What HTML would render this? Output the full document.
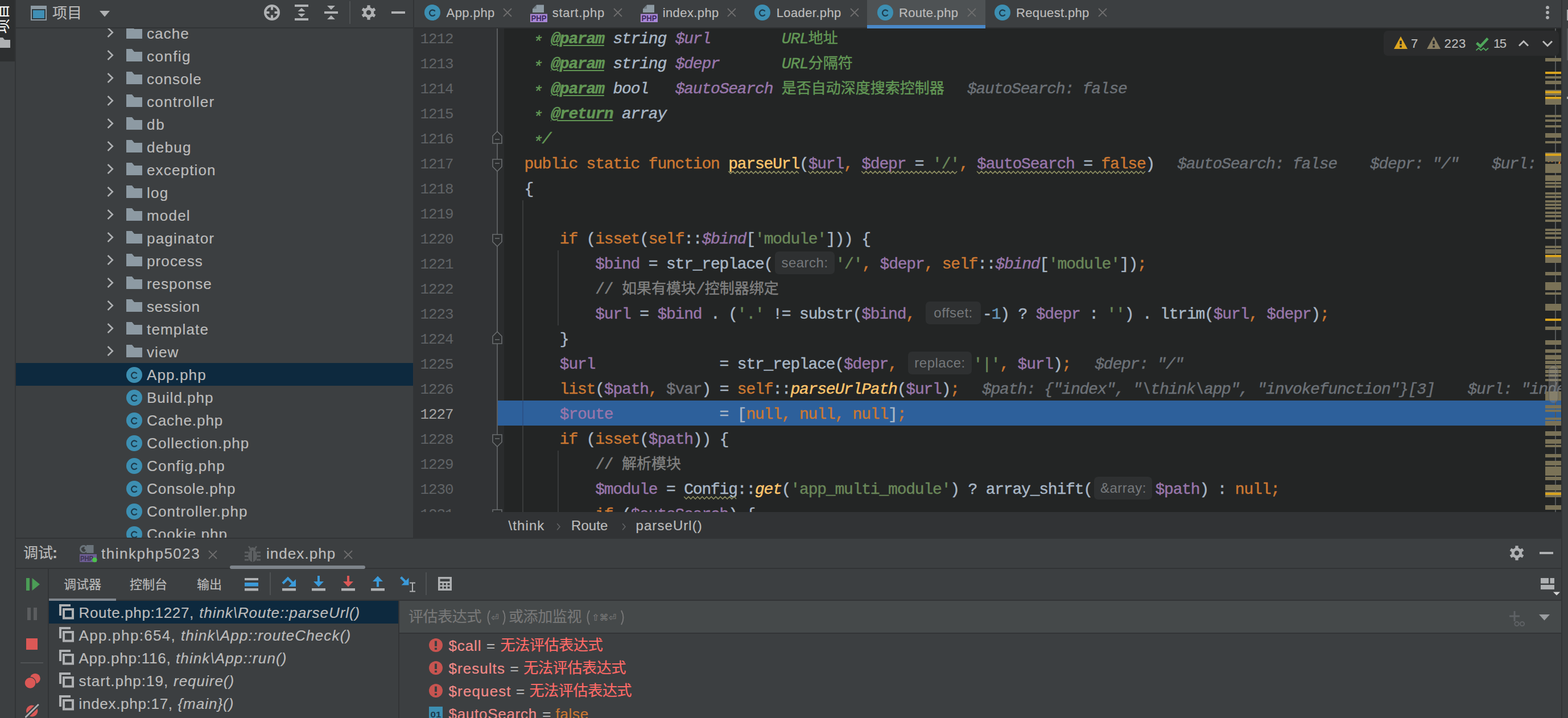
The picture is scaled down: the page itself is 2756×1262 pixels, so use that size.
<!DOCTYPE html>
<html><head><meta charset="utf-8"><title>PhpStorm</title>
<style>html,body{margin:0;padding:0;background:#3c3f41;}
body{width:2756px;height:1262px;overflow:hidden;position:relative;font-family:"Liberation Sans",sans-serif;font-kerning:none;}
#root{position:absolute;left:0;top:0;width:2756px;height:1262px;overflow:hidden;}
#root>div,#root>svg{position:absolute;}
.t{white-space:pre;-webkit-text-stroke:0.22px currentColor;}
.clip{overflow:hidden;}
.clip>div,.clip>svg{position:absolute;}
.ln{position:absolute;left:0;height:44px;white-space:pre;font:28px/44px "Liberation Mono",monospace;letter-spacing:-1.203px;color:#a9b7c6;-webkit-text-stroke:0.45px currentColor;}
.ln span{display:inline-block;height:44px;vertical-align:top;}
.ln span.z{display:inline;height:auto;vertical-align:baseline;font-family:"Liberation Mono","Noto Sans CJK SC",monospace;font-size:26px;font-style:normal;letter-spacing:0;}
.k{color:#cc7832}.s{color:#6a8759}.v{color:#9876aa}.vi{color:#9876aa;font-style:italic}
.f{color:#ffc66d}.fi{color:#ffc66d;font-style:italic}.c{color:#808080}.d{color:#629755;font-style:italic}
.dt{color:#629755;font-style:italic;font-weight:bold;text-decoration:underline;text-decoration-thickness:2px;text-underline-offset:3px}
.di{color:#a9b7c6;font-style:italic}.n{color:#6897bb}.u{color:#72737a}
.h{color:#6c7177;font-style:italic}
.hint{-webkit-text-stroke:0;display:inline-block;box-sizing:border-box;height:40px !important;margin-top:-1px;border-radius:7px;background:#2e3031;color:#75787b;font:24px/39px "Liberation Sans",sans-serif;letter-spacing:0.5px;text-align:center;vertical-align:top;}
</style></head>
<body>
<div id="root">
<div style="left:0px;top:0px;width:26px;height:108px;background:#2d2f30;"></div>
<div style="left:26px;top:0px;width:2px;height:1262px;background:#323436;"></div>
<svg style="left:0px;top:66px;" width="18" height="18" viewBox="0 0 18 18"><path d="M-8 0L5 0L8 4L18 4L18 18L-8 18Z" fill="#afb1b3"/></svg>
<div style="left:-8px;top:7px;width:26px;height:52px;overflow:hidden"><div style="position:absolute;left:0;top:52px;transform:rotate(-90deg);transform-origin:0 0;white-space:pre;font:26px/26px 'Liberation Sans','Noto Sans CJK SC',sans-serif;color:#ffffff;">项目</div></div>
<div style="left:28px;top:48px;width:698px;height:2px;background:#313335;"></div>
<svg style="left:54px;top:10px;" width="28" height="26" viewBox="0 0 28 26"><rect x="0" y="0" width="28" height="26" fill="#8d9aa3"/><rect x="2" y="6" width="24" height="18" fill="#2f3a40"/><rect x="4" y="8" width="20" height="14" fill="#3f8fb5"/></svg>
<div class="t" style="left:92px;top:9.5px;font:26px/26px 'Liberation Sans','Noto Sans CJK SC',sans-serif;color:#bbbbbb;">项目</div>
<svg style="left:175px;top:19px;" width="18" height="11" viewBox="0 0 18 11"><path d="M0 0H18L9 10.5Z" fill="#afb1b3"/></svg>
<svg style="left:464px;top:8px;" width="28" height="28" viewBox="0 0 28 28"><circle cx="14" cy="14" r="12" fill="none" stroke="#afb1b3" stroke-width="4"/><path d="M14 2V9.5M14 18.5V26M2 14H9.5M18.5 14H26" stroke="#afb1b3" stroke-width="4"/></svg>
<svg style="left:518px;top:8px;" width="24" height="28" viewBox="0 0 24 28"><path d="M0 0H24V4H0ZM0 24H24V28H0ZM12 6L18.5 12H5.5ZM12 22L18.5 16H5.5Z" fill="#afb1b3"/></svg>
<svg style="left:570px;top:8px;" width="24" height="28" viewBox="0 0 24 28"><path d="M0 12H24V16H0ZM12 9L19 2H5ZM12 19L19 26H5Z" fill="#afb1b3"/></svg>
<div style="left:614px;top:2px;width:2px;height:40px;background:#4f5254;"></div>
<svg style="left:634px;top:8px;" width="28" height="28" viewBox="0 0 28 28"><path d="M11.3 5.1L11.4 1.3L16.6 1.3L16.7 5.1L20.3 7.2L23.7 5.4L26.3 9.9L23.1 11.9L23.1 16.1L26.3 18.1L23.7 22.6L20.3 20.8L16.7 22.9L16.6 26.7L11.4 26.7L11.3 22.9L7.7 20.8L4.3 22.6L1.7 18.1L4.9 16.1L4.9 11.9L1.7 9.9L4.3 5.4L7.7 7.2ZM18.3 14A4.3 4.3 0 1 0 9.7 14A4.3 4.3 0 1 0 18.3 14Z" fill="#afb1b3" fill-rule="evenodd"/></svg>
<div style="left:688px;top:20px;width:24px;height:4px;background:#afb1b3;"></div>
<div class="clip" style="left:28px;top:50px;width:698px;height:895px">
<svg style="left:160px;top:-2.0px" width="13" height="18" viewBox="0 0 13 18"><path d="M1.5 1L9.8 9L1.5 17" fill="none" stroke="#afb1b3" stroke-width="2.6"/></svg>
<svg style="left:194px;top:-3.8000000000000007px" width="28" height="22" viewBox="0 0 28 22"><path d="M0 0H10L14 5H28V22H0Z" fill="#8d9aa3"/></svg>
<div class="t" style="left:230px;top:-3.8px;font:26px/26px 'Liberation Sans',sans-serif;color:#bbbbbb;letter-spacing:1.07px;">cache</div>
<svg style="left:160px;top:38.0px" width="13" height="18" viewBox="0 0 13 18"><path d="M1.5 1L9.8 9L1.5 17" fill="none" stroke="#afb1b3" stroke-width="2.6"/></svg>
<svg style="left:194px;top:36.2px" width="28" height="22" viewBox="0 0 28 22"><path d="M0 0H10L14 5H28V22H0Z" fill="#8d9aa3"/></svg>
<div class="t" style="left:230px;top:36.2px;font:26px/26px 'Liberation Sans',sans-serif;color:#bbbbbb;letter-spacing:1.42px;">config</div>
<svg style="left:160px;top:78.0px" width="13" height="18" viewBox="0 0 13 18"><path d="M1.5 1L9.8 9L1.5 17" fill="none" stroke="#afb1b3" stroke-width="2.6"/></svg>
<svg style="left:194px;top:76.2px" width="28" height="22" viewBox="0 0 28 22"><path d="M0 0H10L14 5H28V22H0Z" fill="#8d9aa3"/></svg>
<div class="t" style="left:230px;top:76.2px;font:26px/26px 'Liberation Sans',sans-serif;color:#bbbbbb;letter-spacing:1.03px;">console</div>
<svg style="left:160px;top:117.99999999999999px" width="13" height="18" viewBox="0 0 13 18"><path d="M1.5 1L9.8 9L1.5 17" fill="none" stroke="#afb1b3" stroke-width="2.6"/></svg>
<svg style="left:194px;top:116.19999999999999px" width="28" height="22" viewBox="0 0 28 22"><path d="M0 0H10L14 5H28V22H0Z" fill="#8d9aa3"/></svg>
<div class="t" style="left:230px;top:116.2px;font:26px/26px 'Liberation Sans',sans-serif;color:#bbbbbb;letter-spacing:1.25px;">controller</div>
<svg style="left:160px;top:158.0px" width="13" height="18" viewBox="0 0 13 18"><path d="M1.5 1L9.8 9L1.5 17" fill="none" stroke="#afb1b3" stroke-width="2.6"/></svg>
<svg style="left:194px;top:156.2px" width="28" height="22" viewBox="0 0 28 22"><path d="M0 0H10L14 5H28V22H0Z" fill="#8d9aa3"/></svg>
<div class="t" style="left:230px;top:156.2px;font:26px/26px 'Liberation Sans',sans-serif;color:#bbbbbb;letter-spacing:1.67px;">db</div>
<svg style="left:160px;top:198.0px" width="13" height="18" viewBox="0 0 13 18"><path d="M1.5 1L9.8 9L1.5 17" fill="none" stroke="#afb1b3" stroke-width="2.6"/></svg>
<svg style="left:194px;top:196.2px" width="28" height="22" viewBox="0 0 28 22"><path d="M0 0H10L14 5H28V22H0Z" fill="#8d9aa3"/></svg>
<div class="t" style="left:230px;top:196.2px;font:26px/26px 'Liberation Sans',sans-serif;color:#bbbbbb;letter-spacing:1.27px;">debug</div>
<svg style="left:160px;top:238.0px" width="13" height="18" viewBox="0 0 13 18"><path d="M1.5 1L9.8 9L1.5 17" fill="none" stroke="#afb1b3" stroke-width="2.6"/></svg>
<svg style="left:194px;top:236.2px" width="28" height="22" viewBox="0 0 28 22"><path d="M0 0H10L14 5H28V22H0Z" fill="#8d9aa3"/></svg>
<div class="t" style="left:230px;top:236.2px;font:26px/26px 'Liberation Sans',sans-serif;color:#bbbbbb;letter-spacing:1.15px;">exception</div>
<svg style="left:160px;top:278.0px" width="13" height="18" viewBox="0 0 13 18"><path d="M1.5 1L9.8 9L1.5 17" fill="none" stroke="#afb1b3" stroke-width="2.6"/></svg>
<svg style="left:194px;top:276.2px" width="28" height="22" viewBox="0 0 28 22"><path d="M0 0H10L14 5H28V22H0Z" fill="#8d9aa3"/></svg>
<div class="t" style="left:230px;top:276.2px;font:26px/26px 'Liberation Sans',sans-serif;color:#bbbbbb;letter-spacing:1.29px;">log</div>
<svg style="left:160px;top:318.0px" width="13" height="18" viewBox="0 0 13 18"><path d="M1.5 1L9.8 9L1.5 17" fill="none" stroke="#afb1b3" stroke-width="2.6"/></svg>
<svg style="left:194px;top:316.2px" width="28" height="22" viewBox="0 0 28 22"><path d="M0 0H10L14 5H28V22H0Z" fill="#8d9aa3"/></svg>
<div class="t" style="left:230px;top:316.2px;font:26px/26px 'Liberation Sans',sans-serif;color:#bbbbbb;letter-spacing:1.19px;">model</div>
<svg style="left:160px;top:358.0px" width="13" height="18" viewBox="0 0 13 18"><path d="M1.5 1L9.8 9L1.5 17" fill="none" stroke="#afb1b3" stroke-width="2.6"/></svg>
<svg style="left:194px;top:356.2px" width="28" height="22" viewBox="0 0 28 22"><path d="M0 0H10L14 5H28V22H0Z" fill="#8d9aa3"/></svg>
<div class="t" style="left:230px;top:356.2px;font:26px/26px 'Liberation Sans',sans-serif;color:#bbbbbb;letter-spacing:1.20px;">paginator</div>
<svg style="left:160px;top:398.0px" width="13" height="18" viewBox="0 0 13 18"><path d="M1.5 1L9.8 9L1.5 17" fill="none" stroke="#afb1b3" stroke-width="2.6"/></svg>
<svg style="left:194px;top:396.2px" width="28" height="22" viewBox="0 0 28 22"><path d="M0 0H10L14 5H28V22H0Z" fill="#8d9aa3"/></svg>
<div class="t" style="left:230px;top:396.2px;font:26px/26px 'Liberation Sans',sans-serif;color:#bbbbbb;letter-spacing:1.12px;">process</div>
<svg style="left:160px;top:438.0px" width="13" height="18" viewBox="0 0 13 18"><path d="M1.5 1L9.8 9L1.5 17" fill="none" stroke="#afb1b3" stroke-width="2.6"/></svg>
<svg style="left:194px;top:436.2px" width="28" height="22" viewBox="0 0 28 22"><path d="M0 0H10L14 5H28V22H0Z" fill="#8d9aa3"/></svg>
<div class="t" style="left:230px;top:436.2px;font:26px/26px 'Liberation Sans',sans-serif;color:#bbbbbb;letter-spacing:0.96px;">response</div>
<svg style="left:160px;top:478.0px" width="13" height="18" viewBox="0 0 13 18"><path d="M1.5 1L9.8 9L1.5 17" fill="none" stroke="#afb1b3" stroke-width="2.6"/></svg>
<svg style="left:194px;top:476.2px" width="28" height="22" viewBox="0 0 28 22"><path d="M0 0H10L14 5H28V22H0Z" fill="#8d9aa3"/></svg>
<div class="t" style="left:230px;top:476.2px;font:26px/26px 'Liberation Sans',sans-serif;color:#bbbbbb;letter-spacing:0.79px;">session</div>
<svg style="left:160px;top:518.0px" width="13" height="18" viewBox="0 0 13 18"><path d="M1.5 1L9.8 9L1.5 17" fill="none" stroke="#afb1b3" stroke-width="2.6"/></svg>
<svg style="left:194px;top:516.2px" width="28" height="22" viewBox="0 0 28 22"><path d="M0 0H10L14 5H28V22H0Z" fill="#8d9aa3"/></svg>
<div class="t" style="left:230px;top:516.2px;font:26px/26px 'Liberation Sans',sans-serif;color:#bbbbbb;letter-spacing:1.17px;">template</div>
<svg style="left:160px;top:558.0px" width="13" height="18" viewBox="0 0 13 18"><path d="M1.5 1L9.8 9L1.5 17" fill="none" stroke="#afb1b3" stroke-width="2.6"/></svg>
<svg style="left:194px;top:556.2px" width="28" height="22" viewBox="0 0 28 22"><path d="M0 0H10L14 5H28V22H0Z" fill="#8d9aa3"/></svg>
<div class="t" style="left:230px;top:556.2px;font:26px/26px 'Liberation Sans',sans-serif;color:#bbbbbb;letter-spacing:1.12px;">view</div>
<div style="left:0;top:588px;width:698px;height:40px;background:#0d293e"></div>
<svg style="left:194px;top:595.2px" width="28" height="28" viewBox="0 0 28 28"><circle cx="14" cy="14" r="14" fill="#3d8fb2"/><path d="M18.6 11.9A5.2 5.2 0 1 0 18.6 17.5" fill="none" stroke="#1d3b4c" stroke-width="2.3"/></svg>
<div class="t" style="left:230px;top:596.2px;font:26px/26px 'Liberation Sans',sans-serif;color:#bbbbbb;letter-spacing:1.12px;">App.php</div>
<svg style="left:194px;top:635.2px" width="28" height="28" viewBox="0 0 28 28"><circle cx="14" cy="14" r="14" fill="#3d8fb2"/><path d="M18.6 11.9A5.2 5.2 0 1 0 18.6 17.5" fill="none" stroke="#1d3b4c" stroke-width="2.3"/></svg>
<div class="t" style="left:230px;top:636.2px;font:26px/26px 'Liberation Sans',sans-serif;color:#bbbbbb;letter-spacing:1.01px;">Build.php</div>
<svg style="left:194px;top:675.2px" width="28" height="28" viewBox="0 0 28 28"><circle cx="14" cy="14" r="14" fill="#3d8fb2"/><path d="M18.6 11.9A5.2 5.2 0 1 0 18.6 17.5" fill="none" stroke="#1d3b4c" stroke-width="2.3"/></svg>
<div class="t" style="left:230px;top:676.2px;font:26px/26px 'Liberation Sans',sans-serif;color:#bbbbbb;letter-spacing:0.94px;">Cache.php</div>
<svg style="left:194px;top:715.2px" width="28" height="28" viewBox="0 0 28 28"><circle cx="14" cy="14" r="14" fill="#3d8fb2"/><path d="M18.6 11.9A5.2 5.2 0 1 0 18.6 17.5" fill="none" stroke="#1d3b4c" stroke-width="2.3"/></svg>
<div class="t" style="left:230px;top:716.2px;font:26px/26px 'Liberation Sans',sans-serif;color:#bbbbbb;letter-spacing:1.12px;">Collection.php</div>
<svg style="left:194px;top:755.2px" width="28" height="28" viewBox="0 0 28 28"><circle cx="14" cy="14" r="14" fill="#3d8fb2"/><path d="M18.6 11.9A5.2 5.2 0 1 0 18.6 17.5" fill="none" stroke="#1d3b4c" stroke-width="2.3"/></svg>
<div class="t" style="left:230px;top:756.2px;font:26px/26px 'Liberation Sans',sans-serif;color:#bbbbbb;letter-spacing:1.21px;">Config.php</div>
<svg style="left:194px;top:795.2px" width="28" height="28" viewBox="0 0 28 28"><circle cx="14" cy="14" r="14" fill="#3d8fb2"/><path d="M18.6 11.9A5.2 5.2 0 1 0 18.6 17.5" fill="none" stroke="#1d3b4c" stroke-width="2.3"/></svg>
<div class="t" style="left:230px;top:796.2px;font:26px/26px 'Liberation Sans',sans-serif;color:#bbbbbb;letter-spacing:0.94px;">Console.php</div>
<svg style="left:194px;top:835.2px" width="28" height="28" viewBox="0 0 28 28"><circle cx="14" cy="14" r="14" fill="#3d8fb2"/><path d="M18.6 11.9A5.2 5.2 0 1 0 18.6 17.5" fill="none" stroke="#1d3b4c" stroke-width="2.3"/></svg>
<div class="t" style="left:230px;top:836.2px;font:26px/26px 'Liberation Sans',sans-serif;color:#bbbbbb;letter-spacing:1.12px;">Controller.php</div>
<svg style="left:194px;top:875.2px" width="28" height="28" viewBox="0 0 28 28"><circle cx="14" cy="14" r="14" fill="#3d8fb2"/><path d="M18.6 11.9A5.2 5.2 0 1 0 18.6 17.5" fill="none" stroke="#1d3b4c" stroke-width="2.3"/></svg>
<div class="t" style="left:230px;top:876.2px;font:26px/26px 'Liberation Sans',sans-serif;color:#bbbbbb;letter-spacing:1.05px;">Cookie.php</div>
</div>
<div style="left:726px;top:0px;width:2px;height:945px;background:#323436;"></div>
<div style="left:728px;top:48px;width:2016px;height:2px;background:#2f3133;"></div>
<div style="left:1524px;top:0px;width:208px;height:44px;background:#4e5254;"></div>
<div style="left:1524px;top:44px;width:208px;height:6px;background:#4a88c7;"></div>
<svg style="left:746px;top:8px" width="28" height="28" viewBox="0 0 28 28"><circle cx="14" cy="14" r="14" fill="#3d8fb2"/><path d="M18.6 11.9A5.2 5.2 0 1 0 18.6 17.5" fill="none" stroke="#1d3b4c" stroke-width="2.3"/></svg>
<div class="t" style="left:784.5px;top:12.4px;font:22px/22px 'Liberation Sans',sans-serif;color:#bbbbbb;letter-spacing:0.48px;">App.php</div>
<svg style="left:884px;top:14px" width="16" height="16" viewBox="-8 -8 16 16"><path d="M-7 -7L7 7M7 -7L-7 7" stroke="#6e6e6e" stroke-width="1.8" fill="none"/></svg>
<svg style="left:932px;top:7.5px" width="30" height="31" viewBox="0 0 30 31"><path d="M4 7.5L11 0.5H24V14H4Z" fill="#8d9aa3"/><path d="M4 7.5L11 0.5V7.5Z" fill="#3c3f41" opacity="0.35"/><rect x="0" y="16.5" width="30" height="14.5" fill="#a987d6"/><text x="15" y="29" text-anchor="middle" font-family="Liberation Sans,sans-serif" font-weight="bold" font-size="14.5" fill="#3b2a5c" textLength="27" lengthAdjust="spacingAndGlyphs">PHP</text></svg>
<div class="t" style="left:970.7px;top:12.4px;font:22px/22px 'Liberation Sans',sans-serif;color:#bbbbbb;letter-spacing:0.75px;">start.php</div>
<svg style="left:1078px;top:14px" width="16" height="16" viewBox="-8 -8 16 16"><path d="M-7 -7L7 7M7 -7L-7 7" stroke="#6e6e6e" stroke-width="1.8" fill="none"/></svg>
<svg style="left:1126px;top:7.5px" width="30" height="31" viewBox="0 0 30 31"><path d="M4 7.5L11 0.5H24V14H4Z" fill="#8d9aa3"/><path d="M4 7.5L11 0.5V7.5Z" fill="#3c3f41" opacity="0.35"/><rect x="0" y="16.5" width="30" height="14.5" fill="#a987d6"/><text x="15" y="29" text-anchor="middle" font-family="Liberation Sans,sans-serif" font-weight="bold" font-size="14.5" fill="#3b2a5c" textLength="27" lengthAdjust="spacingAndGlyphs">PHP</text></svg>
<div class="t" style="left:1164.7px;top:12.4px;font:22px/22px 'Liberation Sans',sans-serif;color:#bbbbbb;letter-spacing:0.40px;">index.php</div>
<svg style="left:1278px;top:14px" width="16" height="16" viewBox="-8 -8 16 16"><path d="M-7 -7L7 7M7 -7L-7 7" stroke="#6e6e6e" stroke-width="1.8" fill="none"/></svg>
<svg style="left:1326px;top:8px" width="28" height="28" viewBox="0 0 28 28"><circle cx="14" cy="14" r="14" fill="#3d8fb2"/><path d="M18.6 11.9A5.2 5.2 0 1 0 18.6 17.5" fill="none" stroke="#1d3b4c" stroke-width="2.3"/></svg>
<div class="t" style="left:1364.7px;top:12.4px;font:22px/22px 'Liberation Sans',sans-serif;color:#bbbbbb;letter-spacing:0.39px;">Loader.php</div>
<svg style="left:1494px;top:14px" width="16" height="16" viewBox="-8 -8 16 16"><path d="M-7 -7L7 7M7 -7L-7 7" stroke="#6e6e6e" stroke-width="1.8" fill="none"/></svg>
<svg style="left:1542px;top:8px" width="28" height="28" viewBox="0 0 28 28"><circle cx="14" cy="14" r="14" fill="#3d8fb2"/><path d="M18.6 11.9A5.2 5.2 0 1 0 18.6 17.5" fill="none" stroke="#1d3b4c" stroke-width="2.3"/></svg>
<div class="t" style="left:1580px;top:12.4px;font:22px/22px 'Liberation Sans',sans-serif;color:#bbbbbb;letter-spacing:0.30px;">Route.php</div>
<svg style="left:1700px;top:14px" width="16" height="16" viewBox="-8 -8 16 16"><path d="M-7 -7L7 7M7 -7L-7 7" stroke="#6e6e6e" stroke-width="1.8" fill="none"/></svg>
<svg style="left:1748px;top:8px" width="28" height="28" viewBox="0 0 28 28"><circle cx="14" cy="14" r="14" fill="#3d8fb2"/><path d="M18.6 11.9A5.2 5.2 0 1 0 18.6 17.5" fill="none" stroke="#1d3b4c" stroke-width="2.3"/></svg>
<div class="t" style="left:1786px;top:12.4px;font:22px/22px 'Liberation Sans',sans-serif;color:#bbbbbb;letter-spacing:0.36px;">Request.php</div>
<svg style="left:1930px;top:14px" width="16" height="16" viewBox="-8 -8 16 16"><path d="M-7 -7L7 7M7 -7L-7 7" stroke="#6e6e6e" stroke-width="1.8" fill="none"/></svg>
<svg style="left:2716px;top:10px;" width="8" height="24" viewBox="0 0 8 24"><circle cx="4" cy="3.2" r="2.9" fill="#afb1b3"/><circle cx="4" cy="12.0" r="2.9" fill="#afb1b3"/><circle cx="4" cy="20.8" r="2.9" fill="#afb1b3"/></svg>
<div class="clip" style="left:728px;top:50px;width:2016px;height:850px;background:#232525">
<div style="left:0;top:0;width:145px;height:850px;background:#313335"></div>
<div style="left:147px;top:0;width:11px;height:850px;background:#2a2c2d"></div>
<div style="left:147px;top:654px;width:1869px;height:44px;background:#2d609b"></div>
<div style="left:145px;top:0;width:2px;height:850px;background:#5a5d5f"></div>
<div style="left:190px;top:302px;width:2px;height:850px;background:#393b3c"></div>
<div style="left:190px;top:654px;width:2px;height:44px;background:#2a5288"></div>
<div style="left:252px;top:390px;width:2px;height:132px;background:#393b3c"></div>
<div style="left:252px;top:742px;width:2px;height:200px;background:#393b3c"></div>
<div class="ln" style="left:10.5px;top:-3px;color:#606366;font-size:26px;letter-spacing:-1.1px;-webkit-text-stroke:0">1212</div>
<div class="ln" style="left:10.5px;top:41px;color:#606366;font-size:26px;letter-spacing:-1.1px;-webkit-text-stroke:0">1213</div>
<div class="ln" style="left:10.5px;top:85px;color:#606366;font-size:26px;letter-spacing:-1.1px;-webkit-text-stroke:0">1214</div>
<div class="ln" style="left:10.5px;top:129px;color:#606366;font-size:26px;letter-spacing:-1.1px;-webkit-text-stroke:0">1215</div>
<div class="ln" style="left:10.5px;top:173px;color:#606366;font-size:26px;letter-spacing:-1.1px;-webkit-text-stroke:0">1216</div>
<div class="ln" style="left:10.5px;top:217px;color:#606366;font-size:26px;letter-spacing:-1.1px;-webkit-text-stroke:0">1217</div>
<div class="ln" style="left:10.5px;top:261px;color:#606366;font-size:26px;letter-spacing:-1.1px;-webkit-text-stroke:0">1218</div>
<div class="ln" style="left:10.5px;top:305px;color:#606366;font-size:26px;letter-spacing:-1.1px;-webkit-text-stroke:0">1219</div>
<div class="ln" style="left:10.5px;top:349px;color:#606366;font-size:26px;letter-spacing:-1.1px;-webkit-text-stroke:0">1220</div>
<div class="ln" style="left:10.5px;top:393px;color:#606366;font-size:26px;letter-spacing:-1.1px;-webkit-text-stroke:0">1221</div>
<div class="ln" style="left:10.5px;top:437px;color:#606366;font-size:26px;letter-spacing:-1.1px;-webkit-text-stroke:0">1222</div>
<div class="ln" style="left:10.5px;top:481px;color:#606366;font-size:26px;letter-spacing:-1.1px;-webkit-text-stroke:0">1223</div>
<div class="ln" style="left:10.5px;top:525px;color:#606366;font-size:26px;letter-spacing:-1.1px;-webkit-text-stroke:0">1224</div>
<div class="ln" style="left:10.5px;top:569px;color:#606366;font-size:26px;letter-spacing:-1.1px;-webkit-text-stroke:0">1225</div>
<div class="ln" style="left:10.5px;top:613px;color:#606366;font-size:26px;letter-spacing:-1.1px;-webkit-text-stroke:0">1226</div>
<div class="ln" style="left:10.5px;top:657px;color:#a4a3a3;font-size:26px;letter-spacing:-1.1px;-webkit-text-stroke:0">1227</div>
<div class="ln" style="left:10.5px;top:701px;color:#606366;font-size:26px;letter-spacing:-1.1px;-webkit-text-stroke:0">1228</div>
<div class="ln" style="left:10.5px;top:745px;color:#606366;font-size:26px;letter-spacing:-1.1px;-webkit-text-stroke:0">1229</div>
<div class="ln" style="left:10.5px;top:789px;color:#606366;font-size:26px;letter-spacing:-1.1px;-webkit-text-stroke:0">1230</div>
<div class="ln" style="left:10.5px;top:833px;color:#606366;font-size:26px;letter-spacing:-1.1px;-webkit-text-stroke:0">1231</div>
<svg style="left:137px;top:180px" width="18" height="23" viewBox="0 0 18 23"><path d="M1 22H17V9L9 1L1 9Z" fill="#2c2e2f" stroke="#6a6d6f" stroke-width="1.6"/><path d="M5 15H13" stroke="#6a6d6f" stroke-width="1.6"/></svg>
<svg style="left:137px;top:229px" width="18" height="23" viewBox="0 0 18 23"><path d="M1 1H17V14L9 22L1 14Z" fill="#2c2e2f" stroke="#6a6d6f" stroke-width="1.6"/><path d="M5 8H13" stroke="#6a6d6f" stroke-width="1.6"/></svg>
<svg style="left:137px;top:361px" width="18" height="23" viewBox="0 0 18 23"><path d="M1 1H17V14L9 22L1 14Z" fill="#2c2e2f" stroke="#6a6d6f" stroke-width="1.6"/><path d="M5 8H13" stroke="#6a6d6f" stroke-width="1.6"/></svg>
<svg style="left:137px;top:532px" width="18" height="23" viewBox="0 0 18 23"><path d="M1 22H17V9L9 1L1 9Z" fill="#2c2e2f" stroke="#6a6d6f" stroke-width="1.6"/><path d="M5 15H13" stroke="#6a6d6f" stroke-width="1.6"/></svg>
<svg style="left:137px;top:713px" width="18" height="23" viewBox="0 0 18 23"><path d="M1 1H17V14L9 22L1 14Z" fill="#2c2e2f" stroke="#6a6d6f" stroke-width="1.6"/><path d="M5 8H13" stroke="#6a6d6f" stroke-width="1.6"/></svg>
<svg style="left:137px;top:845px" width="18" height="23" viewBox="0 0 18 23"><path d="M1 1H17V14L9 22L1 14Z" fill="#2c2e2f" stroke="#6a6d6f" stroke-width="1.6"/><path d="M5 8H13" stroke="#6a6d6f" stroke-width="1.6"/></svg>
<div class="clip" style="left:147px;top:0;width:1869px;height:850px">
<div class="ln" style="left:-16px;top:-3px">     <span class="d"><span style="position:relative;top:6px">*</span> </span><span class="dt">@param</span><span class="di"> string </span><span class="vi">$url</span><span class="d">        URL<span class="z">地址</span></span></div>
<div class="ln" style="left:-16px;top:41px">     <span class="d"><span style="position:relative;top:6px">*</span> </span><span class="dt">@param</span><span class="di"> string </span><span class="vi">$depr</span><span class="d">       URL<span class="z">分隔符</span></span></div>
<div class="ln" style="left:-16px;top:85px">     <span class="d"><span style="position:relative;top:6px">*</span> </span><span class="dt">@param</span><span class="di"> bool   </span><span class="vi">$autoSearch</span><span class="d"> <span class="z">是否自动深度搜索控制器</span></span><span class="h" style="margin-left:40px">$autoSearch: false</span></div>
<div class="ln" style="left:-16px;top:129px">     <span class="d"><span style="position:relative;top:6px">*</span> </span><span class="dt">@return</span><span class="di"> array</span></div>
<div class="ln" style="left:-16px;top:173px">     <span class="d"><span style="position:relative;top:6px">*</span>/</span></div>
<div class="ln" style="left:-16px;top:217px">    <span class="k">public static function </span><span class="f">parseUrl</span>(<span class="v">$url</span><span class="k">,</span> <span class="v">$depr</span> = <span class="s">'/'</span><span class="k">,</span> <span class="v">$autoSearch</span> = <span class="k">false</span>)<span class="h" style="margin-left:40px">$autoSearch: false</span><span class="h" style="margin-left:58px">$depr: "/"</span><span class="h" style="margin-left:58px">$url: </span><span class="h" style="color:#c57b33">"index/\think\app/invokefunction"</span></div>
<div class="ln" style="left:-16px;top:261px">    {</div>
<div class="ln" style="left:-16px;top:305px"></div>
<div class="ln" style="left:-16px;top:349px">        <span class="k">if</span> (<span class="k">isset</span>(<span class="k">self</span>::<span class="vi">$bind</span>[<span class="s">'module'</span>])) {</div>
<div class="ln" style="left:-16px;top:393px">            <span class="v">$bind</span> = str_replace(<span class="hint" style="width:105px;margin-left:3.8px;margin-right:1.5px">search:</span><span class="s">'/'</span><span class="k">,</span> <span class="v">$depr</span><span class="k">,</span> <span class="k">self</span>::<span class="vi">$bind</span>[<span class="s">'module'</span>])<span class="k">;</span></div>
<div class="ln" style="left:-16px;top:437px">            <span class="c">// <span class="z">如果有模块</span>/<span class="z">控制器绑定</span></span></div>
<div class="ln" style="left:-16px;top:481px">            <span class="v">$url</span> = <span class="v">$bind</span> . (<span class="s">'.'</span> != substr(<span class="v">$bind</span><span class="k">,</span> <span class="hint" style="width:97px;margin-left:3.6px;margin-right:3px">offset:</span>-<span class="n">1</span>) ? <span class="v">$depr</span> : <span class="s">''</span>) . ltrim(<span class="v">$url</span><span class="k">,</span> <span class="v">$depr</span>)<span class="k">;</span></div>
<div class="ln" style="left:-16px;top:525px">        }</div>
<div class="ln" style="left:-16px;top:569px">        <span class="v">$url</span>              = str_replace(<span class="v">$depr</span><span class="k">,</span> <span class="hint" style="width:112px;margin-left:3.8px;margin-right:2.5px">replace:</span><span class="s">'|'</span><span class="k">,</span> <span class="v">$url</span>)<span class="k">;</span><span class="h" style="margin-left:42px">$depr: "/"</span></div>
<div class="ln" style="left:-16px;top:613px">        <span class="k">list</span>(<span class="v">$path</span><span class="k">,</span> <span class="u">$var</span>) = <span class="k">self</span>::<span class="fi">parseUrlPath</span>(<span class="v">$url</span>)<span class="k">;</span><span class="h" style="margin-left:40px">$path: {"index", "\think\app", "invokefunction"}[3]</span><span class="h" style="margin-left:58px">$url: "index/\think\app/invokefunction"</span></div>
<div class="ln" style="left:-16px;top:657px">        <span class="v">$route</span>            = [<span class="k">null, null, null</span>]<span class="k">;</span></div>
<div class="ln" style="left:-16px;top:701px">        <span class="k">if</span> (<span class="k">isset</span>(<span class="v">$path</span>)) {</div>
<div class="ln" style="left:-16px;top:745px">            <span class="c">// <span class="z">解析模块</span></span></div>
<div class="ln" style="left:-16px;top:789px">            <span class="v">$module</span> = Config::<span class="fi">get</span>(<span class="s">'app_multi_module'</span>) ? array_shift(<span class="hint" style="width:102px;margin-left:3.6px;margin-right:5px">&amp;array:</span><span class="v">$path</span>) : <span class="k">null</span><span class="k">;</span></div>
<div class="ln" style="left:-16px;top:833px">            <span class="k">if</span> (<span class="v">$autoSearch</span>) {</div>
<svg style="left:0;top:0;overflow:visible" width="1" height="1"><path d="M405.2 251L409.2 255L413.2 251L417.2 255L421.2 251L425.2 255L429.2 251L433.2 255L437.2 251L441.2 255L445.2 251L449.2 255L453.2 251L457.2 255L461.2 251L465.2 255L469.2 251L473.2 255L477.2 251L481.2 255L485.2 251L489.2 255L493.2 251L497.2 255L501.2 251L505.2 255L509.2 251L513.2 255L517.2 251L521.2 255L525.2 251L529.2 255" fill="none" stroke="#8f8f62" stroke-width="1.6"/></svg>
<svg style="left:0;top:0;overflow:visible" width="1" height="1"><path d="M545.6 251L549.6 255L553.6 251L557.6 255L561.6 251L565.6 255L569.6 251L573.6 255L577.6 251L581.6 255L585.6 251L589.6 255L593.6 251L597.6 255L601.6 251L605.6 255" fill="none" stroke="#8f8f62" stroke-width="1.6"/></svg>
<svg style="left:0;top:0;overflow:visible" width="1" height="1"><path d="M639.2 251L643.2 255L647.2 251L651.2 255L655.2 251L659.2 255L663.2 251L667.2 255L671.2 251L675.2 255L679.2 251L683.2 255L687.2 251L691.2 255L695.2 251L699.2 255L703.2 251L707.2 255L711.2 251L715.2 255L719.2 251L723.2 255L727.2 251L731.2 255L735.2 251L739.2 255L743.2 251L747.2 255L751.2 251L755.2 255L759.2 251L763.2 255L767.2 251L771.2 255L775.2 251L779.2 255L783.2 251L787.2 255L791.2 251L795.2 255L799.2 251L803.2 255L807.2 251" fill="none" stroke="#8f8f62" stroke-width="1.6"/></svg>
<svg style="left:0;top:0;overflow:visible" width="1" height="1"><path d="M842.0 251L846.0 255L850.0 251L854.0 255L858.0 251L862.0 255L866.0 251L870.0 255L874.0 251L878.0 255L882.0 251L886.0 255L890.0 251L894.0 255L898.0 251L902.0 255L906.0 251L910.0 255L914.0 251L918.0 255L922.0 251L926.0 255L930.0 251L934.0 255L938.0 251L942.0 255L946.0 251L950.0 255L954.0 251L958.0 255L962.0 251L966.0 255L970.0 251L974.0 255L978.0 251L982.0 255L986.0 251L990.0 255L994.0 251L998.0 255L1002.0 251L1006.0 255L1010.0 251L1014.0 255L1018.0 251L1022.0 255L1026.0 251L1030.0 255L1034.0 251L1038.0 255L1042.0 251L1046.0 255L1050.0 251L1054.0 255L1058.0 251L1062.0 255L1066.0 251L1070.0 255L1074.0 251L1078.0 255L1082.0 251L1086.0 255L1090.0 251L1094.0 255L1098.0 251L1102.0 255L1106.0 251L1110.0 255L1114.0 251L1118.0 255L1122.0 251L1126.0 255L1130.0 251L1134.0 255L1138.0 251" fill="none" stroke="#8f8f62" stroke-width="1.6"/></svg>
<svg style="left:0;top:0;overflow:visible" width="1" height="1"><path d="M327.2 823L331.2 827L335.2 823L339.2 827L343.2 823L347.2 827L351.2 823L355.2 827L359.2 823L363.2 827L367.2 823L371.2 827L375.2 823L379.2 827L383.2 823L387.2 827L391.2 823L395.2 827L399.2 823L403.2 827L407.2 823L411.2 827L415.2 823L419.2 827" fill="none" stroke="#8f8f62" stroke-width="1.6"/></svg>
</div>
<div style="left:2005px;top:0;width:2px;height:850px;background:#555859"></div>
<div style="left:1988px;top:52px;width:28px;height:6px;background:#7a7257"></div>
<div style="left:1988px;top:76px;width:28px;height:4px;background:#d9a41f"></div>
<div style="left:1988px;top:84px;width:28px;height:4px;background:#7a7257"></div>
<div style="left:1988px;top:92px;width:28px;height:6px;background:#7a7257"></div>
<div style="left:1988px;top:108px;width:28px;height:2px;background:#7a7257"></div>
<div style="left:1988px;top:110px;width:28px;height:4px;background:#d9a41f"></div>
<div style="left:1988px;top:114px;width:28px;height:4px;background:#7a7257"></div>
<div style="left:1988px;top:120px;width:28px;height:4px;background:#d9a41f"></div>
<div style="left:1988px;top:124px;width:28px;height:10px;background:#7a7257"></div>
<div style="left:1988px;top:152px;width:28px;height:4px;background:#7a7257"></div>
<div style="left:1988px;top:160px;width:28px;height:4px;background:#7a7257"></div>
<div style="left:1988px;top:170px;width:28px;height:4px;background:#7a7257"></div>
<div style="left:1988px;top:184px;width:28px;height:8px;background:#7a7257"></div>
<div style="left:1988px;top:198px;width:28px;height:4px;background:#7a7257"></div>
<div style="left:1988px;top:218px;width:28px;height:2px;background:#7a7257"></div>
<div style="left:1988px;top:220px;width:28px;height:4px;background:#d9a41f"></div>
<div style="left:1988px;top:224px;width:28px;height:10px;background:#7a7257"></div>
<div style="left:1988px;top:238px;width:28px;height:16px;background:#7a7257"></div>
<div style="left:1988px;top:258px;width:28px;height:10px;background:#7a7257"></div>
<div style="left:1988px;top:270px;width:28px;height:4px;background:#7a7257"></div>
<div style="left:1988px;top:276px;width:28px;height:4px;background:#7a7257"></div>
<div style="left:1988px;top:288px;width:28px;height:4px;background:#7a7257"></div>
<div style="left:1988px;top:294px;width:28px;height:4px;background:#7a7257"></div>
<div style="left:1988px;top:302px;width:28px;height:4px;background:#7a7257"></div>
<div style="left:1988px;top:308px;width:28px;height:4px;background:#7a7257"></div>
<div style="left:1988px;top:314px;width:28px;height:4px;background:#7a7257"></div>
<div style="left:1988px;top:322px;width:28px;height:4px;background:#7a7257"></div>
<div style="left:1988px;top:328px;width:28px;height:4px;background:#7a7257"></div>
<div style="left:1988px;top:336px;width:28px;height:4px;background:#7a7257"></div>
<div style="left:1988px;top:352px;width:28px;height:4px;background:#7a7257"></div>
<div style="left:1988px;top:358px;width:28px;height:4px;background:#7a7257"></div>
<div style="left:1988px;top:366px;width:28px;height:4px;background:#7a7257"></div>
<div style="left:1988px;top:382px;width:28px;height:4px;background:#7a7257"></div>
<div style="left:1988px;top:388px;width:28px;height:8px;background:#7a7257"></div>
<div style="left:1988px;top:398px;width:28px;height:4px;background:#d9a41f"></div>
<div style="left:1988px;top:402px;width:28px;height:10px;background:#7a7257"></div>
<div style="left:1988px;top:428px;width:28px;height:6px;background:#7a7257"></div>
<div style="left:1988px;top:446px;width:28px;height:14px;background:#7a7257"></div>
<div style="left:1988px;top:464px;width:28px;height:4px;background:#7a7257"></div>
<div style="left:1988px;top:484px;width:28px;height:12px;background:#7a7257"></div>
<div style="left:1988px;top:510px;width:28px;height:4px;background:#d9a41f"></div>
<div style="left:1988px;top:524px;width:28px;height:6px;background:#7a7257"></div>
<div style="left:1988px;top:548px;width:28px;height:8px;background:#7a7257"></div>
<div style="left:1988px;top:564px;width:28px;height:6px;background:#7a7257"></div>
<div style="left:1988px;top:574px;width:28px;height:8px;background:#7a7257"></div>
<div style="left:1988px;top:584px;width:28px;height:6px;background:#7a7257"></div>
<div style="left:1988px;top:592px;width:28px;height:6px;background:#7a7257"></div>
<div style="left:1988px;top:600px;width:28px;height:6px;background:#7a7257"></div>
<div style="left:1988px;top:608px;width:28px;height:4px;background:#7a7257"></div>
<div style="left:1988px;top:616px;width:28px;height:4px;background:#7a7257"></div>
<div style="left:1988px;top:638px;width:28px;height:16px;background:#7a7257"></div>
<div style="left:1988px;top:662px;width:28px;height:6px;background:#7a7257"></div>
<div style="left:1988px;top:670px;width:28px;height:4px;background:#7a7257"></div>
<div style="left:1988px;top:684px;width:28px;height:4px;background:#7a7257"></div>
<div style="left:1988px;top:690px;width:28px;height:8px;background:#7a7257"></div>
<div style="left:1988px;top:708px;width:28px;height:8px;background:#7a7257"></div>
<div style="left:1988px;top:722px;width:28px;height:8px;background:#7a7257"></div>
<div style="left:1988px;top:732px;width:28px;height:4px;background:#7a7257"></div>
<div style="left:1988px;top:748px;width:28px;height:6px;background:#7a7257"></div>
<div style="left:1988px;top:760px;width:28px;height:8px;background:#7a7257"></div>
<div style="left:1988px;top:770px;width:28px;height:16px;background:#7a7257"></div>
<div style="left:1988px;top:788px;width:28px;height:6px;background:#7a7257"></div>
<div style="left:1988px;top:802px;width:28px;height:10px;background:#7a7257"></div>
<div style="left:1988px;top:814px;width:28px;height:2px;background:#7a7257"></div>
<div style="left:1988px;top:816px;width:28px;height:4px;background:#d9a41f"></div>
<div style="left:1988px;top:820px;width:28px;height:4px;background:#7a7257"></div>
<div style="left:1988px;top:838px;width:28px;height:8px;background:#7a7257"></div>
<div style="left:1994px;top:592px;width:17px;height:67px;border-radius:9px;background:rgba(160,160,160,0.28);border:1.5px solid rgba(90,90,90,0.8);box-sizing:border-box"></div>
</div>
<div style="left:2432px;top:54px;width:308px;height:44px;border-radius:7px;background:#2b2c2d"></div>
<svg style="left:2450px;top:64px" width="24" height="22" viewBox="0 0 24 22"><path d="M12 0L24 22H0Z" fill="#dba420"/><rect x="10.2" y="7.5" width="3.6" height="6.5" fill="#2b2c2d"/><rect x="10.2" y="16" width="3.6" height="3.6" fill="#2b2c2d"/></svg>
<div class="t" style="left:2480px;top:65.6px;font:22px/22px 'Liberation Sans',sans-serif;color:#bbbbbb;letter-spacing:-0.92px;">7</div>
<svg style="left:2508px;top:64px" width="24" height="22" viewBox="0 0 24 22"><path d="M12 0L24 22H0Z" fill="#8a7f63"/><rect x="10.2" y="7.5" width="3.6" height="6.5" fill="#2b2c2d"/><rect x="10.2" y="16" width="3.6" height="3.6" fill="#2b2c2d"/></svg>
<div class="t" style="left:2538.5px;top:65.6px;font:22px/22px 'Liberation Sans',sans-serif;color:#bbbbbb;letter-spacing:0.56px;">223</div>
<svg style="left:2594px;top:66px;" width="24" height="25" viewBox="0 0 24 25"><path d="M1.5 9.5L8 15.5L21 1.5" fill="none" stroke="#4fa65b" stroke-width="4.6"/><path d="M0.5 22.5L5 18.5L9 22.5L13.5 18.5L17.5 22.5L22 18.5" fill="none" stroke="#4fa65b" stroke-width="1.8"/></svg>
<div class="t" style="left:2625px;top:65.6px;font:22px/22px 'Liberation Sans',sans-serif;color:#bbbbbb;letter-spacing:-1.50px;">15</div>
<svg style="left:2668px;top:70px;" width="20" height="12" viewBox="0 0 20 12"><path d="M2 10.5L10 2.5L18 10.5" fill="none" stroke="#bbbbbb" stroke-width="3"/></svg>
<svg style="left:2710px;top:71px;" width="20" height="12" viewBox="0 0 20 12"><path d="M2 1.5L10 9.5L18 1.5" fill="none" stroke="#bbbbbb" stroke-width="3"/></svg>
<div style="left:2744px;top:0px;width:2px;height:1262px;background:#323436;"></div>
<div style="left:2746px;top:0px;width:10px;height:1262px;background:#3c3f41;"></div>
<div style="left:2753.5px;top:17px;width:2.5px;height:19px;background:#a9abad;"></div>
<div style="left:2754px;top:50px;width:2px;height:56px;background:#55585a;"></div>
<div style="left:2754px;top:170px;width:2px;height:4px;background:#a9abad;"></div>
<div style="left:726px;top:900px;width:2018px;height:45px;background:#313335;"></div>
<div class="t" style="left:893.5px;top:911.7px;font:24px/24px 'Liberation Sans',sans-serif;color:#bbbbbb;letter-spacing:1.10px;">\think</div>
<div class="t" style="left:1004px;top:911.7px;font:24px/24px 'Liberation Sans',sans-serif;color:#bbbbbb;letter-spacing:0.08px;">Route</div>
<div class="t" style="left:1117.5px;top:911.7px;font:24px/24px 'Liberation Sans',sans-serif;color:#bbbbbb;letter-spacing:1.07px;">parseUrl()</div>
<svg style="left:978px;top:919px;" width="8" height="14" viewBox="0 0 8 14"><path d="M1.2 1.2L6 6.8L1.2 12.4" fill="none" stroke="#626466" stroke-width="1.6"/></svg>
<svg style="left:1093px;top:919px;" width="8" height="14" viewBox="0 0 8 14"><path d="M1.2 1.2L6 6.8L1.2 12.4" fill="none" stroke="#626466" stroke-width="1.6"/></svg>
<div style="left:28px;top:945px;width:2716px;height:2px;background:#323436;"></div>
<div style="left:28px;top:998px;width:2716px;height:2px;background:#323436;"></div>
<div style="left:84px;top:1000px;width:2px;height:262px;background:#323436;"></div>
<div style="left:86px;top:1054px;width:2658px;height:2px;background:#323436;"></div>
<div class="t" style="left:41px;top:959.0px;font:26px/26px 'Liberation Sans','Noto Sans CJK SC',sans-serif;color:#bbbbbb;">调试</div>
<div class="t" style="left:92px;top:959.1px;font:bold 27px/27px 'Liberation Sans',sans-serif;color:#bbbbbb;">:</div>
<svg style="left:140px;top:958px;" width="31" height="31" viewBox="0 0 31 31"><rect x="12" y="0" width="12.5" height="14" fill="#6b747b"/><circle cx="7" cy="7" r="7" fill="#6b747b"/><path d="M2.5 6.5Q5 2.5 9 3L8 6.5L11 9L8.5 12Q4 12 2.5 6.5Z" fill="#3c3f41"/><rect x="0" y="16" width="30" height="14" fill="#6c5d92"/><text x="12.5" y="28" text-anchor="middle" font-family="Liberation Sans,sans-serif" font-weight="bold" font-size="13" fill="#3a3350" textLength="23" lengthAdjust="spacingAndGlyphs">PHP</text><circle cx="26.3" cy="26" r="4.3" fill="#4cc24c"/></svg>
<div class="t" style="left:178px;top:960.0px;font:26px/26px 'Liberation Sans',sans-serif;color:#bbbbbb;letter-spacing:1.51px;">thinkphp5023</div>
<svg style="left:366.3px;top:966.5px" width="16" height="16" viewBox="-8 -8 16 16"><path d="M-7 -7L7 7M7 -7L-7 7" stroke="#6e6e6e" stroke-width="1.8" fill="none"/></svg>
<svg style="left:430px;top:959px;" width="28" height="30" viewBox="0 0 28 30"><g fill="#5d6062"><ellipse cx="14" cy="18" rx="8" ry="10.5"/><path d="M8 8.5A6 5.5 0 0 1 20 8.5Z"/><path d="M0 10.5H7V13.5H0ZM21 10.5H28V13.5H21ZM0 17H6V20H0ZM22 17H28V20H22ZM0 23.5H7V26.5H0ZM21 23.5H28V26.5H21ZM8 0.5L11 4.5L9 6L6 2ZM20 0.5L17 4.5L19 6L22 2Z"/></g><path d="M14 9V28" stroke="#3c3f41" stroke-width="2"/></svg>
<div class="t" style="left:468px;top:960.0px;font:26px/26px 'Liberation Sans',sans-serif;color:#bbbbbb;letter-spacing:1.05px;">index.php</div>
<svg style="left:603.5px;top:966.5px" width="16" height="16" viewBox="-8 -8 16 16"><path d="M-7 -7L7 7M7 -7L-7 7" stroke="#6e6e6e" stroke-width="1.8" fill="none"/></svg>
<div style="left:404px;top:994px;width:238px;height:6px;border-radius:3px;background:#7e848b"></div>
<svg style="left:2652px;top:958px;" width="28" height="28" viewBox="0 0 28 28"><path d="M11.3 5.1L11.4 1.3L16.6 1.3L16.7 5.1L20.3 7.2L23.7 5.4L26.3 9.9L23.1 11.9L23.1 16.1L26.3 18.1L23.7 22.6L20.3 20.8L16.7 22.9L16.6 26.7L11.4 26.7L11.3 22.9L7.7 20.8L4.3 22.6L1.7 18.1L4.9 16.1L4.9 11.9L1.7 9.9L4.3 5.4L7.7 7.2ZM18.3 14A4.3 4.3 0 1 0 9.7 14A4.3 4.3 0 1 0 18.3 14Z" fill="#afb1b3" fill-rule="evenodd"/></svg>
<div style="left:2706px;top:970px;width:24px;height:4px;background:#afb1b3;"></div>
<svg style="left:46px;top:1016px;" width="24" height="22" viewBox="0 0 24 22"><path d="M0 0H6V22H0ZM10.5 0L24 11L10.5 22Z" fill="#4b9d56"/></svg>
<svg style="left:48px;top:1068px;" width="17" height="22" viewBox="0 0 17 22"><path d="M0 0H6V22H0ZM11 0H17V22H11Z" fill="#5b5d5f"/></svg>
<div style="left:46px;top:1122px;width:20px;height:20px;background:#db5856;"></div>
<div style="left:36px;top:1164px;width:40px;height:2px;background:#505355;"></div>
<svg style="left:43px;top:1182px;" width="30" height="30" viewBox="0 0 30 30"><circle cx="18.8" cy="10.7" r="9" fill="#db5856"/><circle cx="10.1" cy="18.4" r="10.6" fill="#3c3f41"/><circle cx="10.1" cy="18.4" r="9.3" fill="#db5856"/></svg>
<svg style="left:44px;top:1236px;" width="28" height="28" viewBox="0 0 28 28"><circle cx="12.2" cy="13.6" r="10.2" fill="#db5856"/><path d="M-0.5 26L24.9 1" stroke="#3c3f41" stroke-width="7.5"/><path d="M0.5 25L23.9 2" stroke="#afb1b3" stroke-width="2.8"/></svg>
<div class="t" style="left:112px;top:1016.9px;font:22px/22px 'Liberation Sans','Noto Sans CJK SC',sans-serif;color:#bbbbbb;">调试器</div>
<div class="t" style="left:228px;top:1016.9px;font:22px/22px 'Liberation Sans','Noto Sans CJK SC',sans-serif;color:#bbbbbb;">控制台</div>
<div class="t" style="left:346px;top:1016.9px;font:22px/22px 'Liberation Sans','Noto Sans CJK SC',sans-serif;color:#bbbbbb;">输出</div>
<div style="left:86px;top:1052px;width:118px;height:4px;background:#7e848b;"></div>
<svg style="left:430px;top:1016px;" width="24" height="23" viewBox="0 0 24 23"><path d="M0 0H24V4H0ZM0 18H24V22.5H0Z" fill="#afb1b3"/><path d="M0 8H24V14.5H0Z" fill="#3b9ad9"/></svg>
<div style="left:474px;top:1006px;width:2px;height:40px;background:#4f5254;"></div>
<svg style="left:494px;top:1012px;" width="28" height="27" viewBox="0 0 28 27"><path d="M2 22H26V26.5H2Z" fill="#afb1b3"/><path d="M3 13.5L12 4.5L20.5 13" fill="none" stroke="#3b9ad9" stroke-width="4.2"/><path d="M26 6V19H13Z" fill="#3b9ad9"/></svg>
<svg style="left:548px;top:1012px;" width="24" height="27" viewBox="0 0 24 27"><path d="M0 22H24V26.5H0Z" fill="#afb1b3"/><path d="M10 0H14V10H21L12 19.5L3 10H10Z" fill="#3b9ad9"/></svg>
<svg style="left:600px;top:1012px;" width="24" height="27" viewBox="0 0 24 27"><path d="M0 22H24V26.5H0Z" fill="#afb1b3"/><path d="M10 0H14V10H21L12 19.5L3 10H10Z" fill="#db5856"/></svg>
<svg style="left:652px;top:1012px;" width="24" height="27" viewBox="0 0 24 27"><path d="M0 22H24V26.5H0Z" fill="#afb1b3"/><path d="M10 19.5H14V10H21L12 0.5L3 10H10Z" fill="#3b9ad9"/></svg>
<svg style="left:702px;top:1012px;" width="30" height="29" viewBox="0 0 30 29"><path d="M2.5 2.5L13 13" stroke="#3b9ad9" stroke-width="4.2"/><path d="M16.5 3.5V16.5H3.5Z" fill="#3b9ad9"/><path d="M18 12.5H28M18 27.5H28M23 12.5V27.5" stroke="#afb1b3" stroke-width="2" fill="none"/></svg>
<div style="left:748px;top:1006px;width:2px;height:40px;background:#4f5254;"></div>
<svg style="left:770px;top:1014px;" width="24" height="24" viewBox="0 0 24 24"><path d="M0 0H24V24H0ZM3.5 3.5V8H20.5V3.5ZM3.5 11V14.5H7.5V11ZM10 11V14.5H14V11ZM16.5 11V14.5H20.5V11ZM3.5 17V20.5H7.5V17ZM10 17V20.5H14V17ZM16.5 17V20.5H20.5V17Z" fill="#afb1b3" fill-rule="evenodd"/></svg>
<svg style="left:2708px;top:1016px;" width="36" height="32" viewBox="0 0 36 32"><path d="M0 0H14V9.5H0ZM16.5 0H24V9.5H16.5ZM0 12H24V20H0Z" fill="#afb1b3"/><path d="M22 24.5H34L28 30.5Z" fill="#d5d5d5"/></svg>
<div style="left:86px;top:1056px;width:614px;height:40px;background:#0d293e;"></div>
<svg style="left:104px;top:1062px;" width="27" height="27" viewBox="0 0 27 27"><path d="M2 20V2H20" fill="none" stroke="#afb1b3" stroke-width="4"/><rect x="8" y="9" width="16" height="15.5" fill="none" stroke="#afb1b3" stroke-width="4"/></svg>
<div class="t" style="left:138.5px;top:1064.0px;font:26px/26px 'Liberation Sans',sans-serif;color:#bbbbbb;letter-spacing:0.68px;">Route.php:1227,</div>
<div class="t" style="left:350.2px;top:1064.0px;font:italic 26px/26px 'Liberation Sans',sans-serif;color:#bbbbbb;letter-spacing:0.93px;">think\Route::parseUrl()</div>
<svg style="left:104px;top:1102px;" width="27" height="27" viewBox="0 0 27 27"><path d="M2 20V2H20" fill="none" stroke="#afb1b3" stroke-width="4"/><rect x="8" y="9" width="16" height="15.5" fill="none" stroke="#afb1b3" stroke-width="4"/></svg>
<div class="t" style="left:138.5px;top:1104.0px;font:26px/26px 'Liberation Sans',sans-serif;color:#bbbbbb;letter-spacing:1.33px;">App.php:654,</div>
<div class="t" style="left:317.9px;top:1104.0px;font:italic 26px/26px 'Liberation Sans',sans-serif;color:#bbbbbb;letter-spacing:1.14px;">think\App::routeCheck()</div>
<svg style="left:104px;top:1142px;" width="27" height="27" viewBox="0 0 27 27"><path d="M2 20V2H20" fill="none" stroke="#afb1b3" stroke-width="4"/><rect x="8" y="9" width="16" height="15.5" fill="none" stroke="#afb1b3" stroke-width="4"/></svg>
<div class="t" style="left:138.5px;top:1144.0px;font:26px/26px 'Liberation Sans',sans-serif;color:#bbbbbb;letter-spacing:0.77px;">App.php:116,</div>
<div class="t" style="left:309px;top:1144.0px;font:italic 26px/26px 'Liberation Sans',sans-serif;color:#bbbbbb;letter-spacing:1.11px;">think\App::run()</div>
<svg style="left:104px;top:1182px;" width="27" height="27" viewBox="0 0 27 27"><path d="M2 20V2H20" fill="none" stroke="#afb1b3" stroke-width="4"/><rect x="8" y="9" width="16" height="15.5" fill="none" stroke="#afb1b3" stroke-width="4"/></svg>
<div class="t" style="left:138.5px;top:1184.0px;font:26px/26px 'Liberation Sans',sans-serif;color:#bbbbbb;letter-spacing:1.02px;">start.php:19,</div>
<div class="t" style="left:305px;top:1184.0px;font:italic 26px/26px 'Liberation Sans',sans-serif;color:#bbbbbb;letter-spacing:0.99px;">require()</div>
<svg style="left:104px;top:1222px;" width="27" height="27" viewBox="0 0 27 27"><path d="M2 20V2H20" fill="none" stroke="#afb1b3" stroke-width="4"/><rect x="8" y="9" width="16" height="15.5" fill="none" stroke="#afb1b3" stroke-width="4"/></svg>
<div class="t" style="left:138.5px;top:1224.0px;font:26px/26px 'Liberation Sans',sans-serif;color:#bbbbbb;letter-spacing:0.70px;">index.php:17,</div>
<div class="t" style="left:312.4px;top:1224.0px;font:italic 26px/26px 'Liberation Sans',sans-serif;color:#bbbbbb;letter-spacing:0.99px;">{main}()</div>
<div style="left:700px;top:1056px;width:2px;height:206px;background:#323436;"></div>
<div style="left:702px;top:1056px;width:2042px;height:56px;background:#45494a;"></div>
<div style="left:702px;top:1112px;width:2042px;height:2px;background:#323436;"></div>
<div class="t" style="left:718px;top:1071px;font:26px/26px 'Liberation Sans','Noto Sans CJK SC',sans-serif;color:#787878;letter-spacing:-0.4px;">评估表达式</div>
<div class="t" style="left:894px;top:1071px;font:26px/26px 'Liberation Sans','Noto Sans CJK SC',sans-serif;color:#787878;letter-spacing:-0.4px;">或添加监视</div>
<svg style="left:854px;top:1072px;" width="8" height="27" viewBox="0 0 8 27"><path d="M7 1Q0 13.5 7 26" fill="none" stroke="#787878" stroke-width="2"/></svg>
<svg style="left:883px;top:1072px;" width="8" height="27" viewBox="0 0 8 27"><path d="M1 1Q8 13.5 1 26" fill="none" stroke="#787878" stroke-width="2"/></svg>
<svg style="left:1029px;top:1072px;" width="8" height="27" viewBox="0 0 8 27"><path d="M7 1Q0 13.5 7 26" fill="none" stroke="#787878" stroke-width="2"/></svg>
<svg style="left:1091px;top:1072px;" width="8" height="27" viewBox="0 0 8 27"><path d="M1 1Q8 13.5 1 26" fill="none" stroke="#787878" stroke-width="2"/></svg>
<div class="t" style="left:863px;top:1078px;font:16px/16px 'Liberation Sans','DejaVu Sans',sans-serif;color:#787878;">⏎</div>
<div class="t" style="left:1040px;top:1078px;font:16px/16px 'Liberation Sans','DejaVu Sans',sans-serif;color:#787878;">⇧⌘⏎</div>
<svg style="left:2652px;top:1074px;" width="30" height="28" viewBox="0 0 30 28"><path d="M10 0V18M1 9H19" stroke="#5f6265" stroke-width="3" fill="none"/><circle cx="14" cy="22.5" r="3.6" fill="none" stroke="#5f6265" stroke-width="2"/><circle cx="23.5" cy="22.5" r="3.6" fill="none" stroke="#5f6265" stroke-width="2"/></svg>
<svg style="left:2705px;top:1080px;" width="20" height="11" viewBox="0 0 20 11"><path d="M0 0H19L9.5 10.5Z" fill="#9a9da0"/></svg>
<svg style="left:754px;top:1122px;" width="24" height="24" viewBox="0 0 24 24"><circle cx="12" cy="12" r="12" fill="#c75450"/><path d="M10 4.5H14V14H10ZM10 16.5H14V20H10Z" fill="#3c3f41"/></svg>
<div class="t" style="left:788.5px;top:1121.5px;font:26px/26px 'Liberation Sans',sans-serif;color:#f08a88;letter-spacing:0.90px;">$call</div>
<div class="t" style="left:855px;top:1121.5px;font:26px/26px 'Liberation Sans',sans-serif;color:#bbbbbb;">=</div>
<div class="t" style="left:879.5px;top:1121px;font:26px/26px 'Liberation Sans','Noto Sans CJK SC',sans-serif;color:#ff6b68;letter-spacing:-0.3px;">无法评估表达式</div>
<svg style="left:754px;top:1162px;" width="24" height="24" viewBox="0 0 24 24"><circle cx="12" cy="12" r="12" fill="#c75450"/><path d="M10 4.5H14V14H10ZM10 16.5H14V20H10Z" fill="#3c3f41"/></svg>
<div class="t" style="left:788.5px;top:1161.5px;font:26px/26px 'Liberation Sans',sans-serif;color:#f08a88;letter-spacing:1.05px;">$results</div>
<div class="t" style="left:896.6px;top:1161.5px;font:26px/26px 'Liberation Sans',sans-serif;color:#bbbbbb;">=</div>
<div class="t" style="left:920.3px;top:1161px;font:26px/26px 'Liberation Sans','Noto Sans CJK SC',sans-serif;color:#ff6b68;letter-spacing:-0.3px;">无法评估表达式</div>
<svg style="left:754px;top:1202px;" width="24" height="24" viewBox="0 0 24 24"><circle cx="12" cy="12" r="12" fill="#c75450"/><path d="M10 4.5H14V14H10ZM10 16.5H14V20H10Z" fill="#3c3f41"/></svg>
<div class="t" style="left:788.5px;top:1201.5px;font:26px/26px 'Liberation Sans',sans-serif;color:#f08a88;letter-spacing:1.13px;">$request</div>
<div class="t" style="left:907px;top:1201.5px;font:26px/26px 'Liberation Sans',sans-serif;color:#bbbbbb;">=</div>
<div class="t" style="left:930.4px;top:1201px;font:26px/26px 'Liberation Sans','Noto Sans CJK SC',sans-serif;color:#ff6b68;letter-spacing:-0.3px;">无法评估表达式</div>
<svg style="left:754px;top:1242px;" width="24" height="24" viewBox="0 0 24 24"><rect width="24" height="24" fill="#3d8fb2"/><text x="12" y="18.5" text-anchor="middle" font-family="Liberation Sans,sans-serif" font-weight="bold" font-size="14.5" fill="#1d3b4c" textLength="19" lengthAdjust="spacingAndGlyphs">01</text></svg>
<div class="t" style="left:788.5px;top:1241.5px;font:26px/26px 'Liberation Sans',sans-serif;color:#f08a88;letter-spacing:0.72px;">$autoSearch</div>
<div class="t" style="left:953.3px;top:1241.5px;font:26px/26px 'Liberation Sans',sans-serif;color:#bbbbbb;">=</div>
<div class="t" style="left:976.6px;top:1241.5px;font:26px/26px 'Liberation Sans',sans-serif;color:#cc7832;letter-spacing:0.67px;">false</div>
</div>
</body></html>
